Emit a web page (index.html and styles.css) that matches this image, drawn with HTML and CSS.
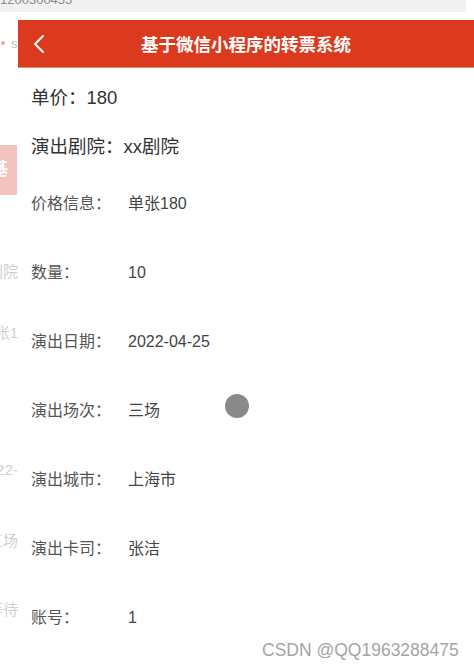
FILE: index.html
```html
<!DOCTYPE html>
<html lang="zh">
<head>
<meta charset="utf-8">
<link rel="stylesheet" href="styles.css">
</head>
<body>
<div class="topbar"><span class="topbar-text">1200300455</span></div>
<div class="main">
  <div class="side">
    <div class="side-item s1"><span class="dot"></span><span class="side-s">s</span></div>
    <div class="side-block">基</div>
    <div class="side-text t1">演出剧院</div>
    <div class="side-text t2">单张1</div>
    <div class="side-text t3">2022-</div>
    <div class="side-text t4">三场</div>
    <div class="side-text t5">等待</div>
  </div>
  <div class="phone">
    <div class="header">
      <svg class="back" width="14" height="20" viewBox="0 0 14 20"><polyline points="11,2 3,10 11,18" fill="none" stroke="#fff" stroke-width="2" stroke-linecap="round" stroke-linejoin="round"/></svg>
      <div class="title">基于微信小程序的转票系统</div>
    </div>
    <div class="content">
      <div class="big first">单价：180</div>
      <div class="big second">演出剧院：xx剧院</div>
      <div class="rows">
        <div class="row"><span class="label">价格信息：</span><span class="value">单张180</span></div>
        <div class="row"><span class="label">数量：</span><span class="value">10</span></div>
        <div class="row"><span class="label">演出日期：</span><span class="value">2022-04-25</span></div>
        <div class="row"><span class="label">演出场次：</span><span class="value">三场</span></div>
        <div class="row"><span class="label">演出城市：</span><span class="value">上海市</span></div>
        <div class="row"><span class="label">演出卡司：</span><span class="value">张洁</span></div>
        <div class="row"><span class="label">账号：</span><span class="value">1</span></div>
      </div>
    </div>
  </div>
</div>
<div class="cursor"></div>
<div class="watermark">CSDN @QQ1963288475</div>
</body>
</html>
```

FILE: styles.css
```css
html, body {
  margin: 0;
  padding: 0;
  background: #fff;
  width: 474px;
  height: 668px;
  overflow: hidden;
  font-family: "Liberation Sans", "Noto Sans CJK SC", sans-serif;
}
.topbar {
  height: 12px;
  width: 466px;
  background: #f1f1f1;
  overflow: hidden;
}
.topbar-text {
  display: block;
  margin-top: -7px;
  font-size: 13px;
  line-height: 14px;
  color: #8a8a8a;
}
.main {
  display: flex;
  height: 656px;
}
.side {
  width: 18px;
  display: flex;
  flex-direction: column;
  overflow: hidden;
  flex-shrink: 0;
}
.side-item {
  display: flex;
  align-items: center;
  margin-top: 24px;
  height: 14px;
  gap: 6px;
}
.dot {
  width: 4px;
  height: 4px;
  border-radius: 50%;
  background: #f3a7a0;
  margin-left: 1px;
}
.side-s {
  font-size: 13px;
  color: #bbb;
}
.side-block {
  margin-top: 95px;
  height: 50px;
  width: 17px;
  background: #f3c4bd;
  color: #fff;
  font-size: 17px;
  font-weight: bold;
  line-height: 50px;
  text-indent: -9px;
  overflow: hidden;
  white-space: nowrap;
}
.side-text {
  white-space: nowrap;
  display: flex;
  justify-content: flex-end;
  font-size: 15px;
  line-height: 18px;
  color: #cfcfcf;
  width: 18px;
  overflow: hidden;
}
.t1 { margin-top: 68px; }
.t2 { margin-top: 43px; }
.t3 { margin-top: 119px; }
.t4 { margin-top: 53px; }
.t5 { margin-top: 51px; }
.phone {
  flex: 1;
  margin-top: 8px;
  display: flex;
  flex-direction: column;
  background: #fff;
}
.header {
  height: 48px;
  background: #dc3a1e;
  display: flex;
  align-items: center;
  border-bottom: 1px solid #e88a7a;
  box-sizing: border-box;
}
.back {
  margin-left: 14px;
  flex-shrink: 0;
}
.title {
  flex: 1;
  text-align: center;
  margin-right: 28px;
  color: #fff;
  font-size: 17.5px;
  font-weight: bold;
  font-family: "Noto Sans CJK SC", sans-serif;
}
.content {
  padding-left: 13px;
  color: #333;
}
.big {
  font-size: 18.5px;
  line-height: 24px;
  color: #333;
}
.first { margin-top: 18px; }
.second { margin-top: 25px; }
.rows {
  display: flex;
  flex-direction: column;
  margin-top: 36px;
  gap: 51px;
}
.row {
  display: flex;
  font-size: 16px;
  line-height: 18px;
}
.label {
  width: 97px;
  color: #555;
}
.value {
  color: #444;
}
.cursor {
  position: absolute;
  left: 225px;
  top: 394px;
  width: 24px;
  height: 24px;
  border-radius: 50%;
  background: #8a8a8a;
  filter: blur(0.6px);
}
.watermark {
  position: absolute;
  left: 262px;
  top: 640px;
  font-size: 17.5px;
  line-height: 20px;
  color: #a5a5a5;
}
```
